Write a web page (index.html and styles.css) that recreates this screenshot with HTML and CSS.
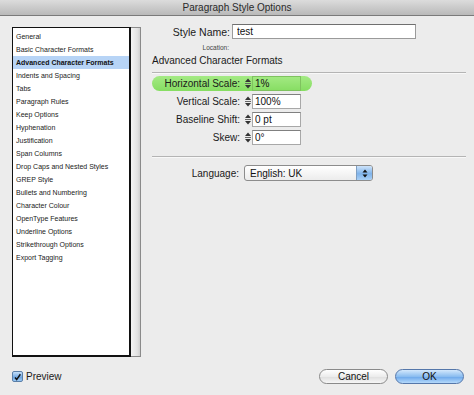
FILE: index.html
```html
<!DOCTYPE html>
<html>
<head>
  <title>Paragraph Style Options</title>
  <link rel="stylesheet" href="styles.css">
</head>
<body>
  <div class="window">
    <div class="titlebar">Paragraph Style Options</div>

    <div class="content">
      <div class="list">
        <ul class="items">
          <li>General</li>
          <li>Basic Character Formats</li>
          <li class="selected">Advanced Character Formats</li>
          <li>Indents and Spacing</li>
          <li>Tabs</li>
          <li>Paragraph Rules</li>
          <li>Keep Options</li>
          <li>Hyphenation</li>
          <li>Justification</li>
          <li>Span Columns</li>
          <li>Drop Caps and Nested Styles</li>
          <li>GREP Style</li>
          <li>Bullets and Numbering</li>
          <li>Character Colour</li>
          <li>OpenType Features</li>
          <li>Underline Options</li>
          <li>Strikethrough Options</li>
          <li>Export Tagging</li>
        </ul>
        <div class="scrollbar"></div>
      </div>

      <div class="panel">
        <div class="name-row">
          <label class="name-label">Style Name:</label>
          <input type="text" class="name-input" value="test">
        </div>
        <div class="location">Location:</div>
        <h2 class="section-title">Advanced Character Formats</h2>
        <div class="rule"></div>

        <div class="field-row highlight">
          <label class="field-label">Horizontal Scale:</label>
          <span class="spinner"><svg width="8" height="13" viewBox="0 0 8 13"><path d="M4 1.5 L7 5 L1 5 Z" fill="#333"/><path d="M1 6.5 H7" stroke="#666" stroke-width="1"/><path d="M4 11.5 L7 8 L1 8 Z" fill="#333"/></svg></span>
          <input type="text" class="field" value="1%">
        </div>
        <div class="field-row">
          <label class="field-label">Vertical Scale:</label>
          <span class="spinner"><svg width="8" height="13" viewBox="0 0 8 13"><path d="M4 1.5 L7 5 L1 5 Z" fill="#333"/><path d="M1 6.5 H7" stroke="#666" stroke-width="1"/><path d="M4 11.5 L7 8 L1 8 Z" fill="#333"/></svg></span>
          <input type="text" class="field" value="100%">
        </div>
        <div class="field-row">
          <label class="field-label">Baseline Shift:</label>
          <span class="spinner"><svg width="8" height="13" viewBox="0 0 8 13"><path d="M4 1.5 L7 5 L1 5 Z" fill="#333"/><path d="M1 6.5 H7" stroke="#666" stroke-width="1"/><path d="M4 11.5 L7 8 L1 8 Z" fill="#333"/></svg></span>
          <input type="text" class="field" value="0 pt">
        </div>
        <div class="field-row">
          <label class="field-label">Skew:</label>
          <span class="spinner"><svg width="8" height="13" viewBox="0 0 8 13"><path d="M4 1.5 L7 5 L1 5 Z" fill="#333"/><path d="M1 6.5 H7" stroke="#666" stroke-width="1"/><path d="M4 11.5 L7 8 L1 8 Z" fill="#333"/></svg></span>
          <input type="text" class="field" value="0°">
        </div>

        <div class="rule rule-lower"></div>

        <div class="lang-row">
          <label class="field-label">Language:</label>
          <div class="select">
            <span class="select-text">English: UK</span>
            <span class="select-arrows"><svg width="6" height="9" viewBox="0 0 6 9"><path d="M3 0.5 L5.5 3.5 L0.5 3.5 Z" fill="#111"/><path d="M3 8.5 L5.5 5.5 L0.5 5.5 Z" fill="#111"/></svg></span>
          </div>
        </div>
      </div>
    </div>

    <div class="footer">
      <label class="preview">
        <span class="checkbox"><svg width="11" height="11" viewBox="0 0 11 11"><path d="M2.5 5.5 L4.5 8 L9 1.5" fill="none" stroke="#111" stroke-width="1.8"/></svg></span>
        Preview
      </label>
      <div class="buttons">
        <button type="button" class="btn btn-cancel">Cancel</button>
        <button type="button" class="btn btn-ok">OK</button>
      </div>
    </div>
  </div>
</body>
</html>
```

FILE: styles.css
```css
body {
  margin: 0;
  background-color: #ececec;
  font-family: "Liberation Sans", Arial, sans-serif;
  color: #1a1a1a;
}

.window {
  width: 474px;
  height: 395px;
  display: flex;
  flex-direction: column;
  background-color: #ececec;
  overflow: hidden;
}

.titlebar {
  height: 15px;
  line-height: 15px;
  text-align: center;
  font-size: 10px;
  color: #2a2a2a;
  background: linear-gradient(#dcdcdc, #b9b9b9);
  border-bottom: 1px solid #7a7a7a;
}

.content {
  display: flex;
  align-items: flex-start;
  padding: 8px 0 0 12px;
}

/* left list */
.list {
  display: flex;
  width: 129px;
  height: 330px;
  margin-top: 3px;
}

.items {
  flex: 1;
  margin: 0;
  padding: 2px 0 0 0;
  list-style: none;
  background-color: #fff;
  border: 1px solid #111;
  border-right-width: 2px;
  border-bottom-width: 2px;
}

.items li {
  height: 13px;
  line-height: 13px;
  padding-left: 3px;
  font-size: 7px;
  color: #222;
  white-space: nowrap;
}

.items li.selected {
  background-color: #b7d4f6;
  font-weight: bold;
  color: #111;
}

.scrollbar {
  width: 9px;
  background: linear-gradient(90deg, #f4f4f4, #e2e2e2 70%, #cfcfcf);
  border: 1px solid #8a8a8a;
  border-left: none;
}

/* right panel */
.panel {
  flex: 1;
  padding: 0 8px 0 11px;
}

.name-row {
  display: flex;
  align-items: center;
  height: 15px;
}

.name-label {
  width: 78px;
  text-align: right;
  font-size: 10.5px;
  margin-right: 2px;
}

.name-input {
  width: 184px;
  height: 15px;
  box-sizing: border-box;
  border: 1px solid #9a9a9a;
  border-top-color: #6f6f6f;
  padding: 0 0 0 4px;
  font-family: "Liberation Sans", Arial, sans-serif;
  font-size: 10px;
  color: #111;
  background-color: #fff;
}

.location {
  width: 77px;
  text-align: right;
  font-size: 6.5px;
  color: #444;
  line-height: 9px;
  margin-top: 4px;
}

.section-title {
  margin: 2px 0 0 0;
  font-size: 10px;
  font-weight: normal;
  line-height: 13px;
  color: #1a1a1a;
}

.rule {
  height: 1px;
  background-color: #b4b4b4;
  border-bottom: 1px solid #f8f8f8;
  margin: 5px 0 2px 0;
}

.rule-lower {
  margin: 11px 0 7px 0;
}

.field-row {
  display: flex;
  align-items: center;
  width: 160px;
  height: 15px;
  margin-bottom: 3px;
}

.field-row.highlight {
  border-radius: 8px;
  background: linear-gradient(#a4ea84, #86dd62);
}

.field-label {
  width: 88px;
  text-align: right;
  font-size: 10px;
  color: #1a1a1a;
}

.spinner {
  display: flex;
  align-items: center;
  justify-content: center;
  width: 9px;
  height: 15px;
  margin-left: 3px;
}

.field {
  width: 49px;
  height: 15px;
  box-sizing: border-box;
  border: 1px solid #a8a8a8;
  border-top-color: #808080;
  padding: 0 0 0 2px;
  font-family: "Liberation Sans", Arial, sans-serif;
  font-size: 10px;
  color: #111;
  background-color: #fff;
}

.highlight .field {
  background-color: transparent;
  border-color: #7fc25f;
}

.lang-row {
  display: flex;
  align-items: center;
  height: 16px;
}

.lang-row .field-label {
  width: 87px;
}

.select {
  display: flex;
  align-items: center;
  width: 129px;
  height: 16px;
  box-sizing: border-box;
  margin-left: 5px;
  border: 1px solid #8c8c8c;
  border-radius: 3px;
  background: linear-gradient(#ffffff, #ececec);
  overflow: hidden;
}

.select-text {
  flex: 1;
  padding-left: 5px;
  font-size: 10px;
  color: #111;
}

.select-arrows {
  display: flex;
  align-items: center;
  justify-content: center;
  width: 15px;
  height: 100%;
  background: linear-gradient(#cde3fa, #7fb3ea 55%, #a9d0f6);
  border-left: 1px solid #7f9fc2;
}

/* footer */
.footer {
  display: flex;
  align-items: center;
  justify-content: space-between;
  padding: 12px 10px 0 12px;
}

.preview {
  display: flex;
  align-items: center;
  font-size: 10px;
  color: #1a1a1a;
}

.checkbox {
  display: flex;
  width: 11px;
  height: 11px;
  box-sizing: border-box;
  margin-right: 3px;
  border: 1px solid #5a7fa8;
  border-radius: 2px;
  background: linear-gradient(#c6e0fa, #6ea6e2 60%, #9ccaf5);
}

.buttons {
  display: flex;
  gap: 7px;
}

.btn {
  width: 69px;
  height: 15px;
  padding: 0;
  border-radius: 8px;
  font-family: "Liberation Sans", Arial, sans-serif;
  font-size: 10px;
  color: #111;
  cursor: pointer;
}

.btn-cancel {
  border: 1px solid #8a8a8a;
  background: linear-gradient(#ffffff, #ececec 50%, #dedede 51%, #f6f6f6);
}

.btn-ok {
  border: 1px solid #5577aa;
  background: linear-gradient(#d3e8fc, #8bbdf0 50%, #6aa6ea 51%, #b4d9fb);
}
```
